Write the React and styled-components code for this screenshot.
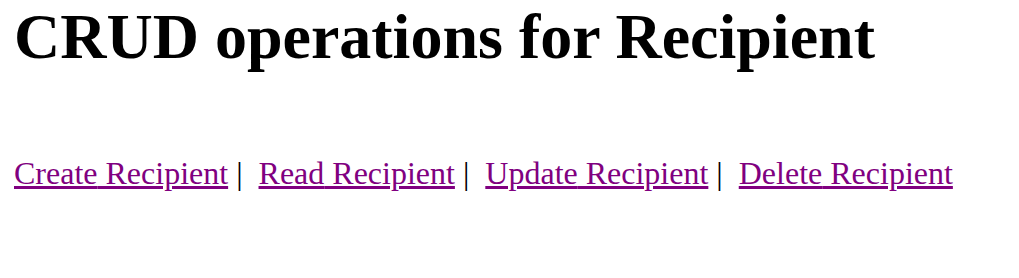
import React from "react";
import styled, { createGlobalStyle } from "styled-components";

const GlobalStyle = createGlobalStyle`
  body {
    margin: 0;
    padding: 0 14px;
    font-family: "Liberation Serif", "Times New Roman", serif;
    background: #fff;
    color: #000;
  }
`;

const Title = styled.h1`
  font-size: 64px;
  font-weight: bold;
  margin: 0 0 81px;
`;

const Nav = styled.div`
  font-size: 32px;
  white-space: pre;
`;

const NavLink = styled.a`
  color: #800080;
  text-decoration: underline;
`;

const links = ["Create", "Read", "Update", "Delete"];

export default function App() {
  return (
    <>
      <GlobalStyle />
      <Title>CRUD operations for Recipient</Title>
      <Nav>
        {links.map((l, i) => (
          <React.Fragment key={l}>
            <NavLink href="#">{l} Recipient</NavLink>
            {i < links.length - 1 && " |  "}
          </React.Fragment>
        ))}
      </Nav>
    </>
  );
}
